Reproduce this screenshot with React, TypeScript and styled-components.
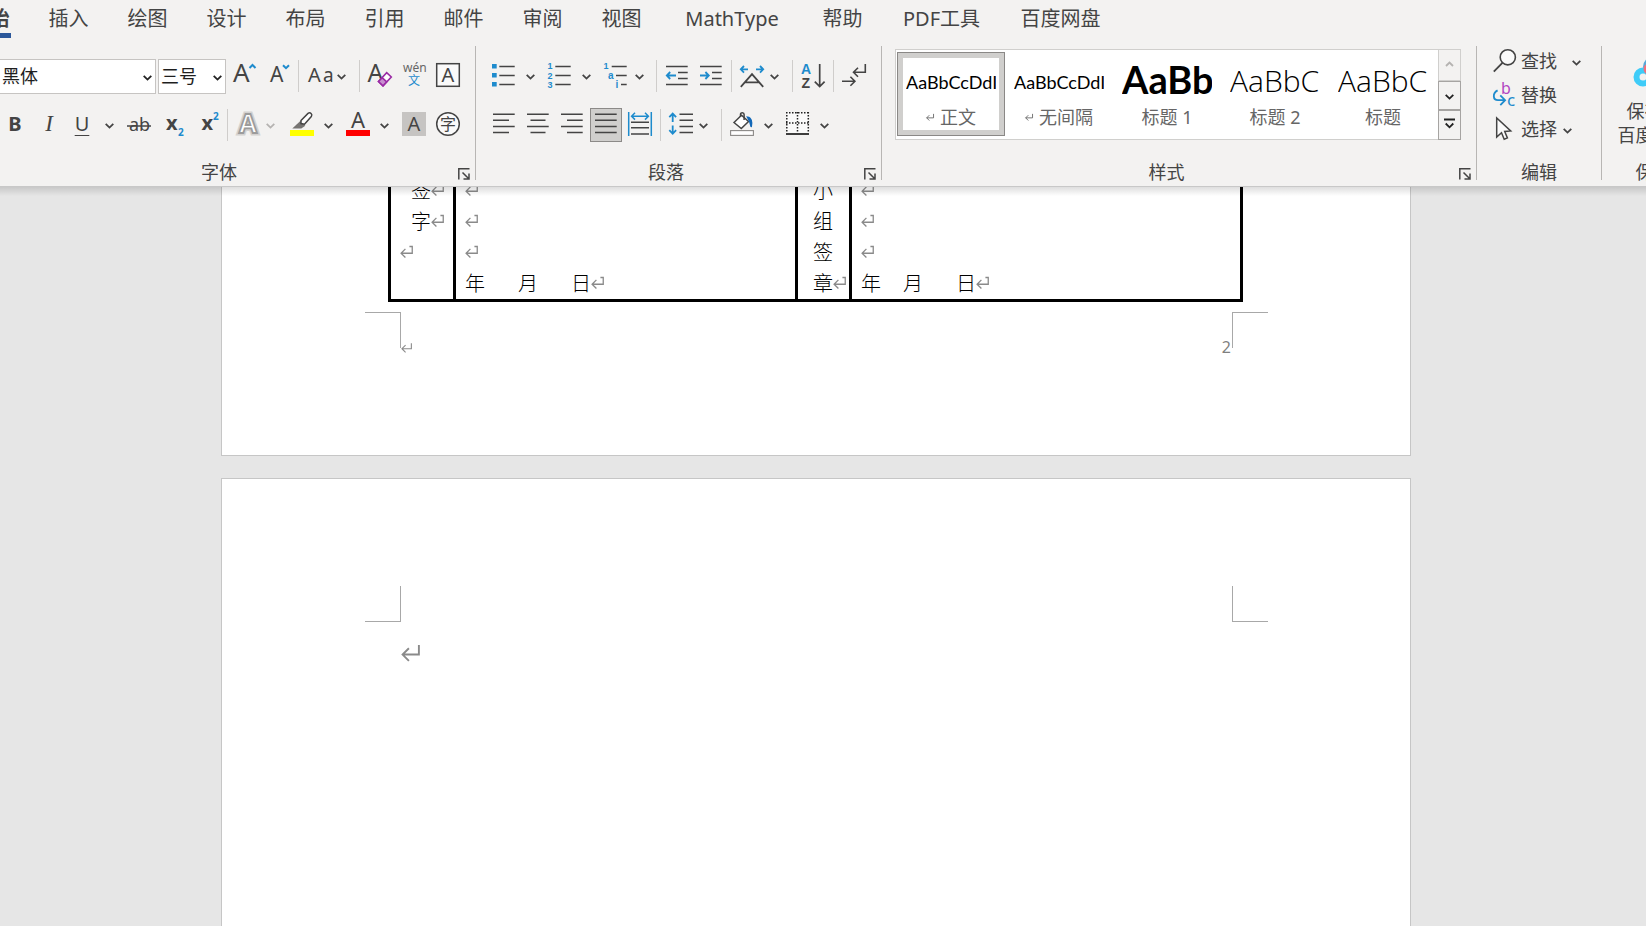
import React from "react";
import styled, { createGlobalStyle, css } from "styled-components";

const ui = `"Noto Sans", "Noto Sans CJK SC", sans-serif`;
const compact = `"Liberation Sans", sans-serif`;
const ink = "#444444";
const blue = "#1e8bcd";

const GlobalStyle = createGlobalStyle`
  *, *::before, *::after { box-sizing: border-box; }
  html, body, #root { height: 100%; }
  body { margin: 0; font-family: ${ui}; color: ${ink}; background: #e6e6e6; }
  button, select { font: inherit; color: inherit; }
  svg { display: block; flex: none; overflow: visible; }
`;

const Window = styled.div`
  display: flex;
  flex-direction: column;
  height: 100vh;
  overflow: hidden;
`;

const Header = styled.header`
  position: relative;
  flex: none;
  overflow: hidden;
  padding-bottom: 6px;
  background: #f3f2f1;
  border-bottom: 1px solid #c8c8c8;
`;

const Tabs = styled.nav`
  display: flex;
  height: 46px;
  margin-left: -50px;
`;

const Tab = styled.button<{ $width: number; $active?: boolean }>`
  flex: none;
  display: flex;
  flex-direction: column;
  align-items: center;
  width: ${(p) => p.$width}px;
  height: 38px;
  padding: 5px 0 0;
  border: 0;
  background: none;
  font-size: 20px;
  line-height: 28px;
  white-space: nowrap;
  ${(p) =>
    p.$active &&
    css`
      font-weight: 700;
      &::after {
        content: "";
        width: 43px;
        height: 5px;
        background: #2b579a;
      }
    `}
`;

const Ribbon = styled.div`
  display: flex;
  height: 134px;
  margin: 0 -60px 0 -18px;
`;

const Group = styled.section<{ $width?: number }>`
  display: flex;
  flex-direction: column;
  justify-content: space-between;
  border-right: 1px solid #b8b6b4;
  ${(p) => (p.$width ? `flex: none; width: ${p.$width}px;` : "flex: 1 0 500px;")}
`;

const GroupFooter = styled.div<{ $indent?: number }>`
  display: flex;
  align-items: flex-start;
  height: 14px;
  padding-left: ${(p) => p.$indent ?? 0}px;
  font-size: 18px;
  line-height: 12px;
`;

const GroupName = styled.span`
  flex: 1;
  text-align: center;
`;

const Launcher = styled.button`
  width: 12px;
  height: 12px;
  margin: 2px 5px 0 8px;
  padding: 0;
  border: 0;
  background: none;
`;

const Rows = styled.div<{ $indent?: number }>`
  display: flex;
  flex-direction: column;
  gap: 14px;
  padding: 13px 0 0 ${(p) => p.$indent ?? 0}px;
`;

const Row = styled.div<{ $indent?: number }>`
  display: flex;
  align-items: flex-start;
  height: 35px;
  padding-left: ${(p) => p.$indent ?? 0}px;
`;

const Tool = styled.button<{ $width?: number; $gap?: number; $pressed?: boolean }>`
  flex: none;
  display: flex;
  align-items: center;
  justify-content: center;
  gap: 5px;
  width: ${(p) => p.$width ?? 34}px;
  height: 32px;
  margin-left: ${(p) => p.$gap ?? 0}px;
  padding: 0;
  border: 0;
  background: none;
  &:disabled { color: #b5b3b1; }
  ${(p) =>
    p.$pressed &&
    css`
      height: 34px;
      padding-bottom: 2px;
      background: #d0cfcd;
      outline: 1px solid #8c8a88;
      outline-offset: -1px;
    `}
`;

const Letter = styled.span<{ $kind: "bold" | "italic" | "underline" }>`
  font-size: 20px;
  line-height: 24px;
  ${(p) => p.$kind === "bold" && "font-weight: 700;"}
  ${(p) => p.$kind === "italic" && `font-family: "Liberation Serif", serif; font-style: italic; font-size: 23px;`}
  ${(p) => p.$kind === "underline" && "text-decoration: underline; text-underline-offset: 4px; text-decoration-thickness: 1px;"}
`;

const Rule = styled.span<{ $gap?: number }>`
  flex: none;
  width: 1px;
  height: 32px;
  margin: 1px 0 0 ${(p) => p.$gap ?? 0}px;
  background: #cfcdcb;
`;

const Combo = styled.label<{ $width: number; $inset?: number }>`
  flex: none;
  display: grid;
  align-items: center;
  width: ${(p) => p.$width}px;
  height: 35px;
  margin-right: 2px;
  border: 1px solid #c6c4c2;
  background: #ffffff;
  & > * { grid-area: 1 / 1; }
  & > svg { justify-self: end; margin: 0 3px 2px 0; pointer-events: none; color: #222222; }
  select {
    width: 100%;
    height: 33px;
    padding: 0 0 2px ${(p) => p.$inset ?? 2}px;
    border: 0;
    appearance: none;
    background: none;
    color: #1f1f1f;
    font-size: 18px;
  }
`;

const Gallery = styled.div`
  display: flex;
  height: 91px;
  margin: 3px 15px 0 13px;
  border: 1px solid #d0cfcd;
  background: #ffffff;
`;

const StyleList = styled.div`
  flex: 1;
  display: flex;
  padding: 2px 0 0 1px;
`;

const StyleCard = styled.button<{ $active?: boolean }>`
  display: flex;
  flex-direction: column;
  align-items: center;
  width: 108px;
  height: 84px;
  padding: 8px 9px 0;
  border: 0;
  background: #ffffff;
  ${(p) => p.$active && "box-shadow: inset 0 0 0 1px #8a8886, inset 0 0 0 6px #d0cfcd;"}
`;

const samples = {
  body: `font: 400 18px/44px Lato, sans-serif;`,
  heading: `font: 700 38px/38px Lato, sans-serif;`,
  light: `font: 300 30px/42px "Open Sans", sans-serif;`,
};

const Sample = styled.span<{ $kind: keyof typeof samples }>`
  width: 90px;
  height: 44px;
  overflow: hidden;
  color: #000000;
  ${(p) => samples[p.$kind]}
  text-align: left;
  white-space: nowrap;
`;

const StyleName = styled.span`
  display: flex;
  align-items: center;
  gap: 6px;
  color: #666666;
  font-size: 18px;
  line-height: 26px;
  white-space: nowrap;
`;

const GalleryScroll = styled.div`
  display: grid;
  grid-template-rows: 32px 29px 30px;
  width: 23px;
  margin: -1px -1px -1px 0;
`;

const ScrollButton = styled.button`
  display: grid;
  place-items: center;
  padding: 0 0 2px;
  border: 1px solid #a6a4a2;
  background: #f3f2f1;
  color: #222222;
  &:disabled { border-color: #d0cfcd; color: #b5b3b1; }
`;

const Commands = styled.div`
  display: flex;
  flex-direction: column;
  gap: 4px;
  padding-left: 16px;
`;

const Command = styled.button<{ $arrowGap?: number }>`
  display: flex;
  align-items: center;
  gap: 4px;
  height: 30px;
  padding: 0;
  border: 0;
  background: none;
  font-size: 18px;
  line-height: 26px;
  & > svg:nth-of-type(2) { margin-left: ${(p) => p.$arrowGap ?? 0}px; }
`;

const CloudButton = styled.button`
  display: flex;
  flex-direction: column;
  align-items: center;
  padding: 10px 0 0;
  border: 0;
  background: none;
  font-size: 18px;
  line-height: 24px;
  & > svg { margin-bottom: 7px; }
`;

const Desk = styled.main`
  position: relative;
  flex: 1;
  display: flex;
  flex-direction: column;
  gap: 22px;
  min-height: 0;
  padding: 0 235px 0 221px;
  overflow: hidden;
  &::before {
    content: "";
    position: absolute;
    inset: 0 0 auto;
    height: 9px;
    background: linear-gradient(rgba(0, 0, 0, 0.13), rgba(0, 0, 0, 0));
    pointer-events: none;
    z-index: 1;
  }
`;

const Sheet = styled.article<{ $last?: boolean }>`
  background: #ffffff;
  border: 1px solid #c6c6c6;
  ${(p) =>
    p.$last
      ? "flex: 1; padding-top: 107px; border-bottom: 0;"
      : "flex: none; margin-top: -13px; padding-bottom: 107px; border-top: 0;"}
`;

const FormTable = styled.table`
  width: calc(100% - 333px);
  margin-left: 166px;
  table-layout: fixed;
  border-collapse: separate;
  border-spacing: 0;
  border: 3px solid #000000;
  border-top: 0;
  color: #000000;
  font-family: "Noto Sans CJK SC", sans-serif;
  font-size: 20px;
  font-weight: 300;
`;

const Column = styled.col<{ $width?: number }>`
  ${(p) => p.$width && `width: ${p.$width}px;`}
`;

const Cell = styled.td<{ $inset: number }>`
  height: 125px;
  padding: 0 0 0 ${(p) => p.$inset}px;
  vertical-align: top;
  & + & { border-left: 3px solid #000000; }
`;

const Line = styled.div<{ $outdent?: boolean }>`
  display: flex;
  align-items: center;
  height: 31px;
  line-height: 31px;
  white-space: nowrap;
  ${(p) => p.$outdent && "margin-left: -11px;"}
`;

const Blank = styled.span<{ $width: number }>`
  width: ${(p) => p.$width}px;
`;

const MarginRow = styled.div<{ $top?: boolean }>`
  display: flex;
  height: 36px;
  margin: ${(p) => (p.$top ? 0 : 10)}px 142px 0 143px;
`;

const Corner = styled.span<{ $sides: string }>`
  flex: none;
  width: 36px;
  height: 36px;
  border: 0 solid #a8a8a8;
  border-width: ${(p) => p.$sides};
`;

const PageFooter = styled.footer`
  flex: 1;
  display: flex;
  align-items: flex-end;
  justify-content: space-between;
  margin-bottom: -5px;
  color: #7f7f7f;
  font-size: 16px;
  line-height: 12px;
  & > span { margin-right: 1px; }
`;

const BodyLine = styled.p`
  margin: 21px 0 0 179px;
`;

/* ---------- icons ---------- */

const Icon = ({ children, width = 24 }: { children: React.ReactNode; width?: number }) => (
  <svg width={width} height="24" viewBox={`0 0 ${width} 24`} fill="none" stroke={ink} strokeWidth="1.5" aria-hidden="true">
    {children}
  </svg>
);

const Glyph = ({
  x,
  y,
  size,
  children,
  fill = ink,
  weight = 400,
  family = ui,
}: {
  x: number;
  y: number;
  size: number;
  children: string;
  fill?: string;
  weight?: number;
  family?: string;
}) => (
  <text x={x} y={y} fontSize={size} fill={fill} fontWeight={weight} stroke="none" fontFamily={family}>
    {children}
  </text>
);

const Chevron = ({ up }: { up?: boolean }) => (
  <svg width="9" height="24" viewBox="0 0 9 24" fill="none" stroke="currentColor" strokeWidth="1.8" aria-hidden="true">
    <path d={up ? "M1 14l3.5-3.5L8 14" : "M.7 11.8l3.8 3.8 3.8-3.8"} />
  </svg>
);

const Mark = ({ size = 13, color = "#8a8a8a" }: { size?: number; color?: string }) => (
  <svg width={size} height={size} viewBox="0 0 12 12" fill="none" stroke={color} strokeWidth="1.2" aria-hidden="true">
    <path d="M8.7 1.4h2.6v6.2H1M5 3.6l-4 4 4 4" />
  </svg>
);

const BodyMark = ({ size, color = "#8a8a8a" }: { size: number; color?: string }) => (
  <svg width={size} height={size} viewBox="0 0 12 12" fill="none" stroke={color} strokeWidth="1.2" aria-hidden="true">
    <path d="M11.3 1.3v6H1M5 3.3l-4 4 4 4" />
  </svg>
);

const LauncherIcon = () => (
  <svg width="12" height="12" viewBox="0 0 12 12" fill="none" stroke={ink} strokeWidth="1.5" aria-hidden="true">
    <path d="M.8 11.5V.8h10.7M4.5 4.5l6.3 6.3M11 5.5V11H5.5" />
  </svg>
);

const Lines = ({ rows }: { rows: [number, number, number][] }) => (
  <path d={rows.map(([y, a, b]) => `M${a} ${y}H${b}`).join("")} />
);

const icons = {
  grow: (
    <Icon>
      <Glyph x={0} y={19.3} size={26}>A</Glyph>
      <path d="M16.5 5l3-3 3 3" stroke={blue} strokeWidth="2" />
    </Icon>
  ),
  shrink: (
    <Icon>
      <Glyph x={2} y={19.3} size={21}>A</Glyph>
      <path d="M15 2.2l3 3 3-3" stroke={blue} strokeWidth="2" />
    </Icon>
  ),
  caseChange: (
    <Icon>
      <Glyph x={0} y={19.3} size={20}>A</Glyph>
      <Glyph x={15} y={19.3} size={19}>a</Glyph>
    </Icon>
  ),
  clear: (
    <Icon>
      <Glyph x={-0.5} y={19.3} size={25}>A</Glyph>
      <path d="M10.5 18.5l8.2-8.8 4.6 4.3-8.3 8.8z" fill="#ffffff" stroke="#9a2ba5" strokeWidth="1.6" />
      <path d="M10.5 18.5l3.6-3.9 4.6 4.3-3.7 3.9z" fill="#c88fd0" stroke="#9a2ba5" strokeWidth="1.6" />
    </Icon>
  ),
  phonetic: (
    <Icon>
      <Glyph x={1} y={9} size={12} fill="#666666">wén</Glyph>
      <Glyph x={6} y={22} size={12} fill={blue}>文</Glyph>
    </Icon>
  ),
  charBorder: (
    <Icon>
      <rect x=".7" y=".7" width="22.6" height="22.6" fill="#fafafa" />
      <Glyph x={5.5} y={19.3} size={20}>A</Glyph>
    </Icon>
  ),
  strike: (
    <Icon>
      <Glyph x={2} y={19.3} size={18}>ab</Glyph>
      <path d="M0 14H24" />
    </Icon>
  ),
  subscript: (
    <Icon>
      <Glyph x={3} y={17.7} size={20} weight={700}>x</Glyph>
      <Glyph x={15} y={24} size={10} weight={700} fill={blue}>2</Glyph>
    </Icon>
  ),
  superscript: (
    <Icon>
      <Glyph x={3.5} y={17.7} size={20} weight={700}>x</Glyph>
      <Glyph x={15} y={7.7} size={10} weight={700} fill={blue}>2</Glyph>
    </Icon>
  ),
  effects: (
    <Icon>
      <g fontFamily={ui} fontSize="26" fontWeight="700" strokeLinejoin="miter">
        <text x="3" y="21" fill="#d4d2d0" stroke="#d4d2d0" strokeWidth="5">A</text>
        <text x="3" y="21" fill="#ffffff" stroke="#9c9c9c" strokeWidth="1.8">A</text>
      </g>
    </Icon>
  ),
  highlight: (
    <Icon>
      <path d="M2.3 16.5l8-7.5 5 4.7-4 2.8z" fill="#767472" stroke="none" />
      <path d="M11 8.6l7-7.2c2.3-1.6 4.8.8 3.3 3.2l-6.8 7.6-3.5-.6z" fill="#ffffff" />
      <rect y="18" width="24" height="6" fill="#ffff00" stroke="none" />
    </Icon>
  ),
  fontColor: (
    <Icon>
      <Glyph x={5} y={16.3} size={22}>A</Glyph>
      <rect y="18" width="24" height="6" fill="#ff0000" stroke="none" />
    </Icon>
  ),
  charShade: (
    <Icon>
      <rect width="24" height="24" fill="#c6c4c2" stroke="none" />
      <Glyph x={5.5} y={19.3} size={20}>A</Glyph>
    </Icon>
  ),
  enclose: (
    <Icon>
      <circle cx="12" cy="12" r="11.3" fill="#fafafa" />
      <Glyph x={4} y={18} size={16}>字</Glyph>
    </Icon>
  ),
  bullets: (
    <Icon>
      <path d="M0 1h4.7v4.5H0zM0 10h4.7v4.5H0zM0 19h4.7v4.5H0z" fill={blue} stroke="none" />
      <Lines rows={[[3.5, 7.3, 22.7], [12.5, 7.3, 22.7], [21.5, 7.3, 22.7]]} />
    </Icon>
  ),
  numbering: (
    <Icon>
      <Glyph x={-0.5} y={6.3} size={9} weight={700} fill={blue} family={compact}>1</Glyph>
      <Glyph x={-0.5} y={15.5} size={9} weight={700} fill={blue} family={compact}>2</Glyph>
      <Glyph x={-0.5} y={24.6} size={9} weight={700} fill={blue} family={compact}>3</Glyph>
      <Lines rows={[[3.5, 7.3, 22.7], [12.5, 7.3, 22.7], [21.5, 7.3, 22.7]]} />
    </Icon>
  ),
  multilevel: (
    <Icon>
      <Glyph x={-0.5} y={6.3} size={9} weight={700} fill={blue} family={compact}>1</Glyph>
      <Glyph x={4} y={16} size={10} weight={700} fill={blue} family={compact}>a</Glyph>
      <Glyph x={11.5} y={24.6} size={10} weight={700} fill={blue} family={compact}>i</Glyph>
      <Lines rows={[[3.5, 7.7, 22.7], [12.5, 12, 22.7], [21.5, 17, 22.7]]} />
    </Icon>
  ),
  outdent: (
    <Icon>
      <Lines rows={[[3.5, 1, 22.7], [9.5, 13, 22.7], [15.5, 13, 22.7], [21.5, 1, 22.7]]} />
      <path d="M11 12.5H2M5.2 9L1.8 12.5 5.2 16" stroke={blue} strokeWidth="1.8" />
    </Icon>
  ),
  indent: (
    <Icon>
      <Lines rows={[[3.5, 1, 22.7], [9.5, 13, 22.7], [15.5, 13, 22.7], [21.5, 1, 22.7]]} />
      <path d="M1 12.5h9M6.4 9l3.4 3.5L6.4 16" stroke={blue} strokeWidth="1.8" />
    </Icon>
  ),
  asianLayout: (
    <Icon>
      <path d="M8 6.3H1M4 3L.8 6.3 4 9.6M16 6.3h7M20 3l3.2 3.3L20 9.6" stroke={blue} strokeWidth="1.8" />
      <path d="M.8 23.8L12 11.2l11.2 12.6M5 19.3h14" strokeWidth="1.8" />
    </Icon>
  ),
  sort: (
    <Icon>
      <Glyph x={0} y={11.3} size={14} weight={700} fill={blue} family={compact}>A</Glyph>
      <Glyph x={0.5} y={24.7} size={14} weight={700} family={compact}>Z</Glyph>
      <path d="M18.7 1v22.5M13.8 18.6l4.9 5 4.9-5" strokeWidth="1.7" />
    </Icon>
  ),
  marks: (
    <Icon>
      <path d="M23.3 1v8.3H12M16 4.8l-4.5 4.5 4.5 4.5M0 18.2h12.5M8.4 13.7l4.5 4.5-4.5 4.5" strokeWidth="1.6" />
    </Icon>
  ),
  left: <Icon><Lines rows={[[2.3, 1, 22.7], [8.3, 1, 17], [14.4, 1, 22.7], [20.4, 1, 17]]} /></Icon>,
  center: <Icon><Lines rows={[[2.3, 1, 22.7], [8.3, 4.5, 19.5], [14.4, 1, 22.7], [20.4, 4.5, 19.5]]} /></Icon>,
  right: <Icon><Lines rows={[[2.3, 1, 22.7], [8.3, 7, 22.7], [14.4, 1, 22.7], [20.4, 7, 22.7]]} /></Icon>,
  justify: <Icon><Lines rows={[[2.3, 1, 22.7], [8.3, 1, 22.7], [14.4, 1, 22.7], [20.4, 1, 22.7]]} /></Icon>,
  distribute: (
    <Icon>
      <path d="M.7 0v24M23.3 0v24M3.6 4.2h16.8M7 .8L3.6 4.2 7 7.6M17 .8l3.4 3.4L17 7.6" stroke={blue} />
      <Lines rows={[[10.2, 3, 21], [15.8, 3, 21], [22, 3, 21]]} />
    </Icon>
  ),
  spacing: (
    <Icon>
      <path d="M3.7 10V1.8M.3 5.2l3.4-3.6 3.4 3.6M3.7 13.5v8.2M.3 18.2l3.4 3.6 3.4-3.6" stroke={blue} strokeWidth="1.8" />
      <Lines rows={[[2.3, 10.5, 24], [8.3, 10.5, 24], [14.4, 10.5, 24], [20.4, 10.5, 24]]} />
    </Icon>
  ),
  shading: (
    <Icon>
      <path d="M4 10.5l7.5-7.3 7 6.3-7.2 7z" fill="#ffffff" />
      <path d="M10.5 5V2.2c0-2 3.6-2 3.6.4V8" />
      <path d="M17.5 5.2c3.6.4 5 4.5 3.7 9.8-.4-3.4-1.4-6-3.7-9.8z" fill="#1268b8" stroke="#1268b8" />
      <rect x=".6" y="18.6" width="22.8" height="4.8" fill="#ffffff" stroke="#8a8886" strokeWidth="1.1" />
    </Icon>
  ),
  borders: (
    <Icon>
      <path d="M.8.8h21.5v20H.8z" fill="#fafafa" stroke="none" />
      <path d="M0 .8h23M0 11h23M.8 0v21M11.5 0v21M22.3 0v21" stroke="#222222" strokeDasharray="1.5 1.5" />
      <path d="M0 22h23" stroke="#000000" />
    </Icon>
  ),
  find: (
    <Icon>
      <circle cx="14.8" cy="8.3" r="7.6" fill="#fafafa" strokeWidth="1.6" />
      <path d="M9.4 13.8L.8 22.6" strokeWidth="1.8" />
    </Icon>
  ),
  replace: (
    <Icon>
      <Glyph x={8} y={11} size={16} fill="#b146c2">b</Glyph>
      <Glyph x={14} y={22.7} size={17} fill={blue}>c</Glyph>
      <path d="M4.6 7.4C-.8 10.3-.2 17.2 5 17.2h6.4M7.3 12.3l4.8 4.9-4.8 4.9" stroke={blue} strokeWidth="1.8" />
    </Icon>
  ),
  select: (
    <Icon>
      <path d="M3.7 1v19l4.8-4.3 2.7 6.5 3.2-1.3-2.7-6.4 6-.5z" fill="#fafafa" />
    </Icon>
  ),
};

const Cloud = () => (
  <svg width="40" height="36" viewBox="0 0 40 36" fill="none" strokeWidth="6" aria-hidden="true">
    <circle cx="20" cy="11" r="8" stroke="#58a8d8" />
    <circle cx="31" cy="21" r="7" stroke="#2f7cf5" />
    <circle cx="9" cy="21" r="6.5" stroke="#3fccf8" />
    <circle cx="15" cy="13" r="5.5" fill="#f2707c" />
  </svg>
);

/* ---------- page ---------- */

const tabs: [string, number][] = [
  ["开始", 79], ["插入", 79], ["绘图", 79], ["设计", 79], ["布局", 79], ["引用", 79], ["邮件", 79],
  ["审阅", 79], ["视图", 79], ["MathType", 142], ["帮助", 79], ["PDF工具", 119], ["百度网盘", 119],
];

const styleCards: { name: string; sample: string; kind: keyof typeof samples; mark?: boolean }[] = [
  { name: "正文", sample: "AaBbCcDdI", kind: "body", mark: true },
  { name: "无间隔", sample: "AaBbCcDdI", kind: "body", mark: true },
  { name: "标题 1", sample: "AaBb", kind: "heading" },
  { name: "标题 2", sample: "AaBbC", kind: "light" },
  { name: "标题", sample: "AaBbC", kind: "light" },
];

const IconTool = ({ label, icon, ...rest }: { label: string; icon: keyof typeof icons; $width?: number; $gap?: number; $pressed?: boolean }) => (
  <Tool aria-label={label} {...rest}>{icons[icon]}</Tool>
);

const Arrow = ({ label, width = 18, disabled }: { label: string; width?: number; disabled?: boolean }) => (
  <Tool aria-label={label} $width={width} disabled={disabled}><Chevron /></Tool>
);

const Footer = ({ name, indent }: { name: string; indent?: number }) => (
  <GroupFooter $indent={indent}>
    <GroupName>{name}</GroupName>
    <Launcher aria-label={`${name}设置`}><LauncherIcon /></Launcher>
  </GroupFooter>
);

const FontGroup = () => (
  <Group $width={494}>
    <Rows>
      <Row>
        <Combo $width={174} $inset={19}>
          <select aria-label="字体名称"><option>黑体</option></select>
          <Chevron />
        </Combo>
        <Combo $width={68}>
          <select aria-label="字号"><option>三号</option></select>
          <Chevron />
        </Combo>
        <IconTool label="增大字号" icon="grow" />
        <IconTool label="减小字号" icon="shrink" $width={36} />
        <Rule />
        <Tool aria-label="更改大小写" $width={56}>{icons.caseChange}<Chevron /></Tool>
        <Rule $gap={4} />
        <IconTool label="清除格式" icon="clear" $gap={3} />
        <IconTool label="拼音指南" icon="phonetic" />
        <IconTool label="字符边框" icon="charBorder" />
      </Row>
      <Row $indent={16}>
        <Tool aria-label="加粗"><Letter $kind="bold">B</Letter></Tool>
        <Tool aria-label="倾斜"><Letter $kind="italic">I</Letter></Tool>
        <Tool aria-label="下划线" $width={32}><Letter $kind="underline">U</Letter></Tool>
        <Arrow label="下划线选项" width={22} />
        <IconTool label="删除线" icon="strike" $gap={2} />
        <IconTool label="下标" icon="subscript" $gap={2} />
        <IconTool label="上标" icon="superscript" $width={35} />
        <Rule />
        <IconTool label="文本效果" icon="effects" $width={26} $gap={7} />
        <Arrow label="文本效果选项" disabled />
        <IconTool label="突出显示" icon="highlight" $gap={6} />
        <Arrow label="突出显示颜色" />
        <IconTool label="字体颜色" icon="fontColor" $gap={4} />
        <Arrow label="字体颜色选项" />
        <IconTool label="字符底纹" icon="charShade" $gap={4} />
        <IconTool label="带圈字符" icon="enclose" />
      </Row>
    </Rows>
    <Footer name="字体" indent={6} />
  </Group>
);

const ParagraphGroup = () => (
  <Group $width={406}>
    <Rows $indent={11}>
      <Row>
        <IconTool label="项目符号" icon="bullets" />
        <Arrow label="项目符号库" />
        <IconTool label="编号" icon="numbering" $gap={4} />
        <Arrow label="编号库" />
        <IconTool label="多级列表" icon="multilevel" $width={30} $gap={6} />
        <Arrow label="列表库" width={16} />
        <Rule $gap={9} />
        <IconTool label="减少缩进量" icon="outdent" $gap={3} />
        <IconTool label="增加缩进量" icon="indent" />
        <Rule $gap={3} />
        <IconTool label="中文版式" icon="asianLayout" $width={30} $gap={5} />
        <Arrow label="中文版式选项" width={14} />
        <Rule $gap={11} />
        <IconTool label="排序" icon="sort" $gap={3} />
        <Rule $gap={3} />
        <IconTool label="显示编辑标记" icon="marks" $gap={3} />
      </Row>
      <Row>
        <IconTool label="左对齐" icon="left" />
        <IconTool label="居中" icon="center" />
        <IconTool label="右对齐" icon="right" />
        <IconTool label="两端对齐" icon="justify" $width={32} $gap={1} $pressed />
        <IconTool label="分散对齐" icon="distribute" $gap={1} />
        <Rule $gap={3} />
        <IconTool label="行距" icon="spacing" $width={30} $gap={5} />
        <Arrow label="行距选项" width={14} />
        <Rule $gap={11} />
        <IconTool label="底纹" icon="shading" $gap={3} />
        <Arrow label="底纹颜色" />
        <IconTool label="边框" icon="borders" $gap={4} />
        <Arrow label="边框选项" />
      </Row>
    </Rows>
    <Footer name="段落" />
  </Group>
);

const StylesGroup = () => (
  <Group>
    <Gallery>
      <StyleList>
        {styleCards.map((s, i) => (
          <StyleCard key={s.name} $active={i === 0}>
            <Sample $kind={s.kind}>{s.sample}</Sample>
            <StyleName>
              {s.mark && <BodyMark size={8} color="#555555" />}
              {s.name}
            </StyleName>
          </StyleCard>
        ))}
      </StyleList>
      <GalleryScroll>
        <ScrollButton aria-label="上一行" disabled><Chevron up /></ScrollButton>
        <ScrollButton aria-label="下一行"><Chevron /></ScrollButton>
        <ScrollButton aria-label="其他样式">
          <svg width="11" height="12" viewBox="0 0 11 12" fill="none" stroke="#222222" strokeWidth="1.8" aria-hidden="true">
            <path d="M0 1.5h11M1.7 5.5l3.8 3.8L9.3 5.5" />
          </svg>
        </ScrollButton>
      </GalleryScroll>
    </Gallery>
    <Footer name="样式" />
  </Group>
);

const EditGroup = () => (
  <Group $width={125}>
    <Commands>
      <Command $arrowGap={11}>{icons.find}查找<Chevron /></Command>
      <Command>{icons.replace}替换</Command>
      <Command $arrowGap={2}>{icons.select}选择<Chevron /></Command>
    </Commands>
    <GroupFooter><GroupName>编辑</GroupName></GroupFooter>
  </Group>
);

const CloudGroup = () => (
  <Group $width={104}>
    <CloudButton>
      <Cloud />
      <span>保存到</span>
      <span>百度网盘</span>
    </CloudButton>
    <GroupFooter><GroupName>保存</GroupName></GroupFooter>
  </Group>
);

export default function App() {
  return (
    <Window>
      <GlobalStyle />
      <Header>
        <Tabs>
          {tabs.map(([name, width], i) => (
            <Tab key={name} $width={width} $active={i === 0}>{name}</Tab>
          ))}
        </Tabs>
        <Ribbon>
          <FontGroup />
          <ParagraphGroup />
          <StylesGroup />
          <EditGroup />
          <CloudGroup />
        </Ribbon>
      </Header>
      <Desk>
        <Sheet>
          <FormTable>
            <colgroup>
              <Column $width={62} />
              <Column />
              <Column $width={54} />
              <Column $width={391} />
            </colgroup>
            <tbody>
              <tr>
                <Cell $inset={20}>
                  <Line>签<Mark /></Line>
                  <Line>字<Mark /></Line>
                  <Line $outdent><Mark /></Line>
                </Cell>
                <Cell $inset={9}>
                  <Line><Mark /></Line>
                  <Line><Mark /></Line>
                  <Line><Mark /></Line>
                  <Line>年<Blank $width={33} />月<Blank $width={33} />日<Mark /></Line>
                </Cell>
                <Cell $inset={15}>
                  <Line>小</Line>
                  <Line>组</Line>
                  <Line>签</Line>
                  <Line>章<Mark /></Line>
                </Cell>
                <Cell $inset={9}>
                  <Line><Mark /></Line>
                  <Line><Mark /></Line>
                  <Line><Mark /></Line>
                  <Line>年<Blank $width={22} />月<Blank $width={33} />日<Mark /></Line>
                </Cell>
              </tr>
            </tbody>
          </FormTable>
          <MarginRow>
            <Corner $sides="1px 1px 0 0" />
            <PageFooter>
              <BodyMark size={11} />
              <span>2</span>
            </PageFooter>
            <Corner $sides="1px 0 0 1px" />
          </MarginRow>
        </Sheet>
        <Sheet $last>
          <MarginRow $top>
            <Corner $sides="0 1px 1px 0" />
            <PageFooter />
            <Corner $sides="0 0 1px 1px" />
          </MarginRow>
          <BodyLine><BodyMark size={19} /></BodyLine>
        </Sheet>
      </Desk>
    </Window>
  );
}
